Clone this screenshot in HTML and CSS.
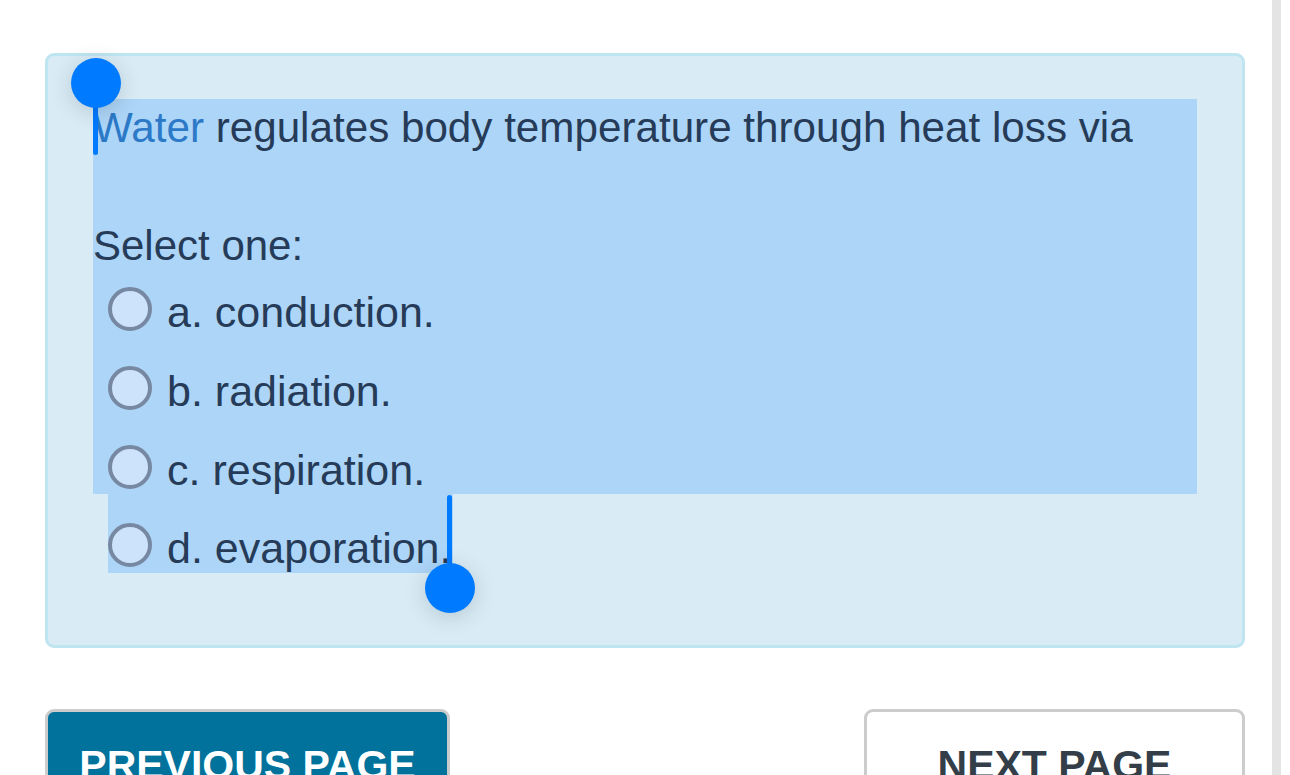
FILE: index.html
```html
<!DOCTYPE html>
<html lang="en">
<head>
<meta charset="utf-8">
<title>Question</title>
<link rel="stylesheet" href="styles.css">
</head>
<body>
<div class="page">
  <main class="main">
    <div class="que">
      <div class="sel">
        <p class="qtext"><span class="link">Water</span> regulates body temperature through heat loss via</p>
        <p class="prompt">Select one:</p>
        <div class="answers">
          <label class="opt"><span class="radio"></span><span class="label">a. conduction.</span></label>
          <label class="opt"><span class="radio"></span><span class="label">b. radiation.</span></label>
          <label class="opt opt-last"><span class="radio"></span><span class="label">c. respiration.</span></label>
        </div>
      </div>
      <label class="opt opt-tail"><span class="radio"></span><span class="label">d. evaporation.</span></label>

      <span class="stem stem-start"></span>
      <span class="knob knob-start"></span>
      <span class="stem stem-end"></span>
      <span class="knob knob-end"></span>
    </div>
    <nav class="pager">
      <button class="btn btn-prev">PREVIOUS PAGE</button>
      <button class="btn btn-next">NEXT PAGE</button>
    </nav>
  </main>
  <div class="track"></div>
</div>
</body>
</html>
```
FILE: styles.css
```css
html, body {
  margin: 0;
  padding: 0;
  background: #ffffff;
  overflow: hidden;
}
body {
  font-family: "Liberation Sans", Arial, sans-serif;
  color: #253b58;
}
.page {
  display: flex;
  height: 775px;
}
.main {
  width: 1200px;
  padding: 53px 0 0 45px;
  flex: none;
}
.track {
  flex: none;
  width: 9px;
  margin-left: 27px;
  height: 100%;
  background: #e4e4e4;
}
.que {
  position: relative;
  box-sizing: border-box;
  width: 1200px;
  height: 595px;
  border: 3px solid #bee5f0;
  border-radius: 9px;
  background: #d9ecf6;
  padding: 43px 45px 0 45px;
}
.sel {
  background: #add5f7;
  height: 395px;
}
.qtext, .prompt {
  margin: 0;
  font-size: 42px;
  line-height: 57px;
}
.qtext {
  font-size: 42.2px;
}
.link {
  color: #2b79c7;
}
.prompt {
  margin-top: 66px;
  line-height: 47px;
}
.answers {
  display: flex;
  flex-direction: column;
}
.opt {
  display: flex;
  align-items: center;
  height: 79px;
  padding-left: 15px;
  font-size: 43px;
}
.opt-last {
  margin-bottom: -12px;
}
.opt-tail {
  box-sizing: border-box;
  width: fit-content;
  margin-left: 15px;
  padding: 22px 2px 0 0;
  background: #add5f7;
}
.radio {
  box-sizing: border-box;
  width: 44px;
  height: 44px;
  border-radius: 50%;
  border: 4px solid #7789a2;
  background: #cde3fb;
  flex: none;
}
.label {
  margin-left: 15px;
  padding-top: 8px;
  line-height: normal;
}
.stem {
  position: absolute;
  width: 5px;
  border-radius: 3px;
  background: #007aff;
}
.stem-start {
  left: 45px;
  top: 27px;
  height: 72px;
}
.stem-end {
  left: 399px;
  top: 439px;
  height: 93px;
}
.knob {
  position: absolute;
  width: 50px;
  height: 50px;
  border-radius: 50%;
  background: #007aff;
  box-shadow: 0 4px 22px rgba(0, 0, 0, 0.16);
}
.knob-start {
  left: 23px;
  top: 2px;
}
.knob-end {
  left: 377px;
  top: 507px;
}
.pager {
  display: flex;
  justify-content: space-between;
  margin-top: 61px;
}
.btn {
  box-sizing: border-box;
  height: 100px;
  border: 3px solid #cccccc;
  border-radius: 9px;
  font-family: "Liberation Sans", Arial, sans-serif;
  font-weight: bold;
  font-size: 41px;
  padding: 30px 0 0 0;
  display: flex;
  align-items: flex-start;
  justify-content: center;
}
.btn-prev {
  width: 405px;
  background: #00729b;
  color: #ffffff;
}
.btn-next {
  width: 381px;
  background: #ffffff;
  color: #333e49;
}
```
